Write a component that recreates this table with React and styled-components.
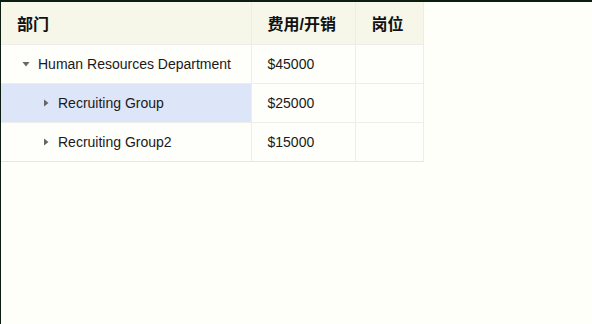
import React from "react";
import styled, { createGlobalStyle } from "styled-components";

const GlobalStyle = createGlobalStyle`
  html, body {
    margin: 0;
    padding: 0;
    background: #fffff9;
  }
  body {
    font-family: "Liberation Sans", Arial, "Noto Sans CJK SC", sans-serif;
  }
`;

const Frame = styled.div`
  box-sizing: border-box;
  min-height: 100vh;
  border-top: 2px solid #0c1c10;
  border-left: 1px solid #0c1c10;
`;

const Table = styled.table`
  border-collapse: collapse;
  table-layout: fixed;
  width: 422px;
  font-size: 14px;
  color: #1a1a1a;
  border-bottom: 1px solid #e6e8dc;
  border-right: 1px solid #e6e8dc;
`;

const HeadCell = styled.th`
  box-sizing: border-box;
  height: 42px;
  padding: 0 16px;
  text-align: left;
  font-size: 16px;
  font-weight: bold;
  color: #111;
  background: #f6f7e8;
  border-right: 1px solid #eceee2;
  font-family: "Liberation Sans", "Noto Sans CJK SC", sans-serif;
`;

const Row = styled.tr`
  height: 39px;
  border-top: 1px solid #eeeee8;
`;

const Cell = styled.td`
  box-sizing: border-box;
  padding: 0 16px;
  background: ${(p) => (p.$selected ? "#dde5f8" : "#fefefb")};
  border-right: 1px solid #eeeee8;
  white-space: nowrap;
`;

const NameWrap = styled.div`
  display: flex;
  align-items: center;
  padding-left: ${(p) => p.$level * 20}px;
`;

const Caret = styled.span`
  width: 12px;
  height: 12px;
  margin-left: 3px;
  margin-right: 6px;
  display: inline-flex;
  align-items: center;
  justify-content: center;
`;

const Arrow = ({ open }) => (
  <svg width="8" height="8" viewBox="0 0 8 8">
    {open ? (
      <path d="M0.5 2 L7.5 2 L4 6.5 Z" fill="#666" />
    ) : (
      <path d="M2 0.5 L6.5 4 L2 7.5 Z" fill="#666" />
    )}
  </svg>
);

const rows = [
  { name: "Human Resources Department", cost: "$45000", level: 0, open: true },
  { name: "Recruiting Group", cost: "$25000", level: 1, selected: true },
  { name: "Recruiting Group2", cost: "$15000", level: 1 },
];

const App = () => (
  <Frame>
    <GlobalStyle />
    <Table>
      <colgroup>
        <col style={{ width: 250 }} />
        <col style={{ width: 104 }} />
        <col style={{ width: 68 }} />
      </colgroup>
      <thead>
        <tr>
          <HeadCell>部门</HeadCell>
          <HeadCell>费用/开销</HeadCell>
          <HeadCell>岗位</HeadCell>
        </tr>
      </thead>
      <tbody>
        {rows.map((r) => (
          <Row key={r.name}>
            <Cell $selected={r.selected}>
              <NameWrap $level={r.level}>
                <Caret>
                  <Arrow open={r.open} />
                </Caret>
                {r.name}
              </NameWrap>
            </Cell>
            <Cell>{r.cost}</Cell>
            <Cell />
          </Row>
        ))}
      </tbody>
    </Table>
  </Frame>
);

export default App;
